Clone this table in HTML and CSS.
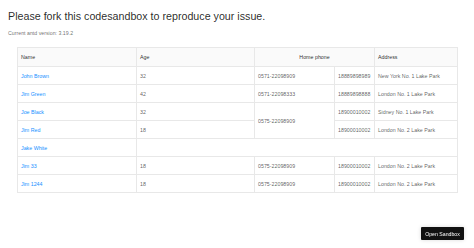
FILE: index.html
```html
<!DOCTYPE html>
<html lang="en">
<head>
  <meta charset="UTF-8"/>
  <title>antd table</title>
  <link rel="stylesheet" href="styles.css">
</head>
<body>

<div class="container">
  <h1>Please fork this codesandbox to reproduce your issue.</h1>
  <p class="version">Current antd version: 3.19.2</p>

  <table class="grid">
    <colgroup>
      <col class="c-name">
      <col class="c-age">
      <col class="c-tel">
      <col class="c-phone">
      <col class="c-addr">
    </colgroup>
    <thead>
      <tr>
        <th>Name</th>
        <th>Age</th>
        <th colspan="2" class="center">Home phone</th>
        <th>Address</th>
      </tr>
    </thead>
    <tbody>
      <tr>
        <td><a href="#">John Brown</a></td>
        <td>32</td>
        <td>0571-22098909</td>
        <td>18889898989</td>
        <td>New York No. 1 Lake Park</td>
      </tr>
      <tr>
        <td><a href="#">Jim Green</a></td>
        <td>42</td>
        <td>0571-22098333</td>
        <td>18889898888</td>
        <td>London No. 1 Lake Park</td>
      </tr>
      <tr>
        <td><a href="#">Joe Black</a></td>
        <td>32</td>
        <td rowspan="2">0575-22098909</td>
        <td>18900010002</td>
        <td>Sidney No. 1 Lake Park</td>
      </tr>
      <tr>
        <td><a href="#">Jim Red</a></td>
        <td>18</td>
        <td>18900010002</td>
        <td>London No. 2 Lake Park</td>
      </tr>
      <tr>
        <td><a href="#">Jake White</a></td>
        <td colspan="4" class="merged"></td>
      </tr>
      <tr>
        <td><a href="#">Jim 33</a></td>
        <td>18</td>
        <td>0575-22098909</td>
        <td>18900010002</td>
        <td>London No. 2 Lake Park</td>
      </tr>
      <tr>
        <td><a href="#">Jim 1244</a></td>
        <td>18</td>
        <td>0575-22098909</td>
        <td>18900010002</td>
        <td>London No. 2 Lake Park</td>
      </tr>
    </tbody>
  </table>
</div>

<button class="open-sandbox">Open Sandbox</button>

</body>
</html>
```

FILE: styles.css
```css
* {
  box-sizing: border-box;
}

body {
  font-family: 'Liberation Sans', Arial, sans-serif;
  background: #fff;
  margin: 0;
  padding: 0;
  color: rgba(0, 0, 0, 0.65);
}

.container {
  padding: 10px 8px 0;
}

h1 {
  font-size: 10.7px;
  line-height: 12px;
  font-weight: normal;
  color: rgba(0, 0, 0, 0.85);
  margin: 0;
}

.version {
  font-size: 5.25px;
  line-height: 7px;
  margin: 8px 0 0;
  color: rgba(0, 0, 0, 0.6);
}

.grid {
  width: 440px;
  margin: 10px 9px 0;
  border-collapse: collapse;
  table-layout: fixed;
  font-size: 5.3px;
  border: 1px solid #e8e8e8;
}

.c-name { width: 119px; }
.c-age { width: 118px; }
.c-tel { width: 80px; }
.c-phone { width: 40px; }
.c-addr { width: 83px; }

th, td {
  border: 1px solid #e8e8e8;
  padding: 0 3px;
  text-align: left;
  vertical-align: middle;
  white-space: nowrap;
}

thead tr {
  height: 19px;
}

tbody tr {
  height: 18px;
}

th {
  background: #fafafa;
  font-weight: normal;
  color: rgba(0, 0, 0, 0.85);
}

th.center {
  text-align: center;
}

td.merged {
  border-left: 1px solid #e8e8e8;
}

a {
  color: #1890ff;
  text-decoration: none;
}

.open-sandbox {
  position: fixed;
  right: 10px;
  bottom: 8px;
  width: 43px;
  height: 13px;
  padding: 0;
  border: none;
  border-radius: 1px;
  background: #111;
  color: #fff;
  font-family: 'Liberation Sans', Arial, sans-serif;
  font-size: 5.2px;
  box-shadow: 0 0 4px rgba(0, 0, 0, 0.15);
  cursor: pointer;
}
```
